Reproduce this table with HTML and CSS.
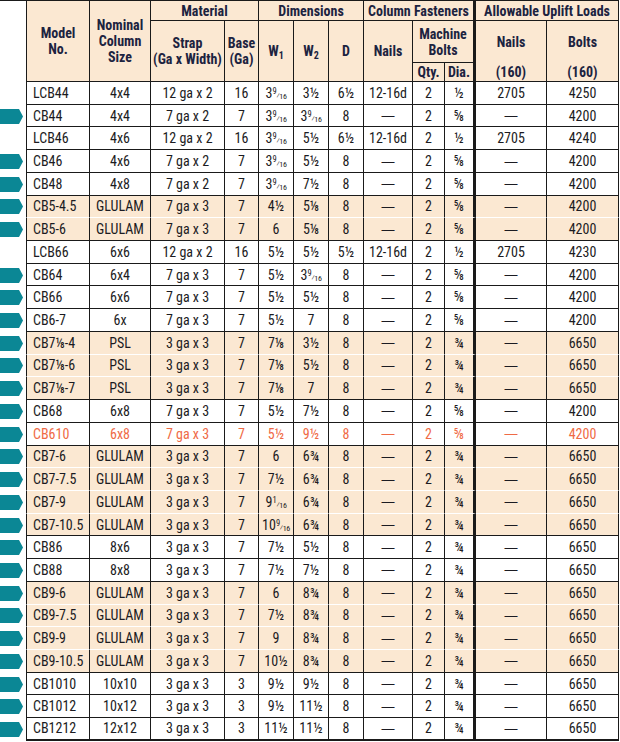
FILE: index.html
```html
<!DOCTYPE html>
<html>
<head>
<meta charset="utf-8">
<link rel="stylesheet" href="styles.css">
</head>
<body>
<table class="spec">
<colgroup>
<col class="c-mk"><col class="c-model"><col class="c-size"><col class="c-strap"><col class="c-base"><col class="c-w1"><col class="c-w2"><col class="c-d"><col class="c-nails"><col class="c-qty"><col class="c-dia"><col class="c-un"><col class="c-ub">
</colgroup>
<thead>
<tr class="h1">
<th class="mk" rowspan="3"></th>
<th class="model" rowspan="3">Model<br>No.</th>
<th rowspan="3">Nominal<br>Column<br>Size</th>
<th colspan="2">Material</th>
<th colspan="3">Dimensions</th>
<th colspan="3" class="thick">Column Fasteners</th>
<th colspan="2">Allowable Uplift Loads</th>
</tr>
<tr class="h2">
<th rowspan="2">Strap<br>(Ga x Width)</th>
<th rowspan="2">Base<br>(Ga)</th>
<th rowspan="2">W<sub class="ix">1</sub></th>
<th rowspan="2">W<sub class="ix">2</sub></th>
<th rowspan="2">D</th>
<th rowspan="2">Nails</th>
<th colspan="2" class="thick">Machine<br>Bolts</th>
<th class="nb">Nails</th>
<th class="nb">Bolts</th>
</tr>
<tr class="h3">
<th>Qty.</th>
<th class="thick">Dia.</th>
<th>(160)</th>
<th>(160)</th>
</tr>
</thead>
<tbody>
<tr><td class="mk"></td><td class="model">LCB44</td><td>4x4</td><td>12 ga x 2</td><td>16</td><td>3<span class="f"><sup>9</sup>⁄<sub>16</sub></span></td><td>3½</td><td>6½</td><td>12-16d</td><td>2</td><td class="thick">½</td><td>2705</td><td>4250</td></tr>
<tr><td class="mk"><svg class="arrow" viewBox="0 0 23 15" width="23" height="15"><polygon points="0,0 19,0 23,7.5 19,15 0,15"/></svg></td><td class="model">CB44</td><td>4x4</td><td>7 ga x 2</td><td>7</td><td>3<span class="f"><sup>9</sup>⁄<sub>16</sub></span></td><td>3<span class="f"><sup>9</sup>⁄<sub>16</sub></span></td><td>8</td><td><span class="dash">—</span></td><td>2</td><td class="thick">⅝</td><td><span class="dash">—</span></td><td>4200</td></tr>
<tr><td class="mk"></td><td class="model">LCB46</td><td>4x6</td><td>12 ga x 2</td><td>16</td><td>3<span class="f"><sup>9</sup>⁄<sub>16</sub></span></td><td>5½</td><td>6½</td><td>12-16d</td><td>2</td><td class="thick">½</td><td>2705</td><td>4240</td></tr>
<tr><td class="mk"><svg class="arrow" viewBox="0 0 23 15" width="23" height="15"><polygon points="0,0 19,0 23,7.5 19,15 0,15"/></svg></td><td class="model">CB46</td><td>4x6</td><td>7 ga x 2</td><td>7</td><td>3<span class="f"><sup>9</sup>⁄<sub>16</sub></span></td><td>5½</td><td>8</td><td><span class="dash">—</span></td><td>2</td><td class="thick">⅝</td><td><span class="dash">—</span></td><td>4200</td></tr>
<tr><td class="mk"><svg class="arrow" viewBox="0 0 23 15" width="23" height="15"><polygon points="0,0 19,0 23,7.5 19,15 0,15"/></svg></td><td class="model">CB48</td><td>4x8</td><td>7 ga x 2</td><td>7</td><td>3<span class="f"><sup>9</sup>⁄<sub>16</sub></span></td><td>7½</td><td>8</td><td><span class="dash">—</span></td><td>2</td><td class="thick">⅝</td><td><span class="dash">—</span></td><td>4200</td></tr>
<tr class="sh sw"><td class="mk"><svg class="arrow" viewBox="0 0 23 15" width="23" height="15"><polygon points="0,0 19,0 23,7.5 19,15 0,15"/></svg></td><td class="model">CB5-4.5</td><td>GLULAM</td><td>7 ga x 3</td><td>7</td><td>4½</td><td>5⅛</td><td>8</td><td><span class="dash">—</span></td><td>2</td><td class="thick">⅝</td><td><span class="dash">—</span></td><td>4200</td></tr>
<tr class="sh"><td class="mk"><svg class="arrow" viewBox="0 0 23 15" width="23" height="15"><polygon points="0,0 19,0 23,7.5 19,15 0,15"/></svg></td><td class="model">CB5-6</td><td>GLULAM</td><td>7 ga x 3</td><td>7</td><td>6</td><td>5⅛</td><td>8</td><td><span class="dash">—</span></td><td>2</td><td class="thick">⅝</td><td><span class="dash">—</span></td><td>4200</td></tr>
<tr><td class="mk"></td><td class="model">LCB66</td><td>6x6</td><td>12 ga x 2</td><td>16</td><td>5½</td><td>5½</td><td>5½</td><td>12-16d</td><td>2</td><td class="thick">½</td><td>2705</td><td>4230</td></tr>
<tr><td class="mk"><svg class="arrow" viewBox="0 0 23 15" width="23" height="15"><polygon points="0,0 19,0 23,7.5 19,15 0,15"/></svg></td><td class="model">CB64</td><td>6x4</td><td>7 ga x 3</td><td>7</td><td>5½</td><td>3<span class="f"><sup>9</sup>⁄<sub>16</sub></span></td><td>8</td><td><span class="dash">—</span></td><td>2</td><td class="thick">⅝</td><td><span class="dash">—</span></td><td>4200</td></tr>
<tr><td class="mk"><svg class="arrow" viewBox="0 0 23 15" width="23" height="15"><polygon points="0,0 19,0 23,7.5 19,15 0,15"/></svg></td><td class="model">CB66</td><td>6x6</td><td>7 ga x 3</td><td>7</td><td>5½</td><td>5½</td><td>8</td><td><span class="dash">—</span></td><td>2</td><td class="thick">⅝</td><td><span class="dash">—</span></td><td>4200</td></tr>
<tr><td class="mk"><svg class="arrow" viewBox="0 0 23 15" width="23" height="15"><polygon points="0,0 19,0 23,7.5 19,15 0,15"/></svg></td><td class="model">CB6-7</td><td>6x</td><td>7 ga x 3</td><td>7</td><td>5½</td><td>7</td><td>8</td><td><span class="dash">—</span></td><td>2</td><td class="thick">⅝</td><td><span class="dash">—</span></td><td>4200</td></tr>
<tr class="sh sw"><td class="mk"><svg class="arrow" viewBox="0 0 23 15" width="23" height="15"><polygon points="0,0 19,0 23,7.5 19,15 0,15"/></svg></td><td class="model">CB7⅛-4</td><td>PSL</td><td>3 ga x 3</td><td>7</td><td>7⅛</td><td>3½</td><td>8</td><td><span class="dash">—</span></td><td>2</td><td class="thick">¾</td><td><span class="dash">—</span></td><td>6650</td></tr>
<tr class="sh sw"><td class="mk"><svg class="arrow" viewBox="0 0 23 15" width="23" height="15"><polygon points="0,0 19,0 23,7.5 19,15 0,15"/></svg></td><td class="model">CB7⅛-6</td><td>PSL</td><td>3 ga x 3</td><td>7</td><td>7⅛</td><td>5½</td><td>8</td><td><span class="dash">—</span></td><td>2</td><td class="thick">¾</td><td><span class="dash">—</span></td><td>6650</td></tr>
<tr class="sh"><td class="mk"><svg class="arrow" viewBox="0 0 23 15" width="23" height="15"><polygon points="0,0 19,0 23,7.5 19,15 0,15"/></svg></td><td class="model">CB7⅛-7</td><td>PSL</td><td>3 ga x 3</td><td>7</td><td>7⅛</td><td>7</td><td>8</td><td><span class="dash">—</span></td><td>2</td><td class="thick">¾</td><td><span class="dash">—</span></td><td>6650</td></tr>
<tr><td class="mk"><svg class="arrow" viewBox="0 0 23 15" width="23" height="15"><polygon points="0,0 19,0 23,7.5 19,15 0,15"/></svg></td><td class="model">CB68</td><td>6x8</td><td>7 ga x 3</td><td>7</td><td>5½</td><td>7½</td><td>8</td><td><span class="dash">—</span></td><td>2</td><td class="thick">⅝</td><td><span class="dash">—</span></td><td>4200</td></tr>
<tr class="red"><td class="mk"><svg class="arrow" viewBox="0 0 23 15" width="23" height="15"><polygon points="0,0 19,0 23,7.5 19,15 0,15"/></svg></td><td class="model">CB610</td><td>6x8</td><td>7 ga x 3</td><td>7</td><td>5½</td><td>9½</td><td>8</td><td><span class="dash">—</span></td><td>2</td><td class="thick">⅝</td><td><span class="dash">—</span></td><td>4200</td></tr>
<tr class="sh sw"><td class="mk"><svg class="arrow" viewBox="0 0 23 15" width="23" height="15"><polygon points="0,0 19,0 23,7.5 19,15 0,15"/></svg></td><td class="model">CB7-6</td><td>GLULAM</td><td>3 ga x 3</td><td>7</td><td>6</td><td>6¾</td><td>8</td><td><span class="dash">—</span></td><td>2</td><td class="thick">¾</td><td><span class="dash">—</span></td><td>6650</td></tr>
<tr class="sh sw"><td class="mk"><svg class="arrow" viewBox="0 0 23 15" width="23" height="15"><polygon points="0,0 19,0 23,7.5 19,15 0,15"/></svg></td><td class="model">CB7-7.5</td><td>GLULAM</td><td>3 ga x 3</td><td>7</td><td>7½</td><td>6¾</td><td>8</td><td><span class="dash">—</span></td><td>2</td><td class="thick">¾</td><td><span class="dash">—</span></td><td>6650</td></tr>
<tr class="sh sw"><td class="mk"><svg class="arrow" viewBox="0 0 23 15" width="23" height="15"><polygon points="0,0 19,0 23,7.5 19,15 0,15"/></svg></td><td class="model">CB7-9</td><td>GLULAM</td><td>3 ga x 3</td><td>7</td><td>9<span class="f"><sup>1</sup>⁄<sub>16</sub></span></td><td>6¾</td><td>8</td><td><span class="dash">—</span></td><td>2</td><td class="thick">¾</td><td><span class="dash">—</span></td><td>6650</td></tr>
<tr class="sh"><td class="mk"><svg class="arrow" viewBox="0 0 23 15" width="23" height="15"><polygon points="0,0 19,0 23,7.5 19,15 0,15"/></svg></td><td class="model">CB7-10.5</td><td>GLULAM</td><td>3 ga x 3</td><td>7</td><td>10<span class="f"><sup>9</sup>⁄<sub>16</sub></span></td><td>6¾</td><td>8</td><td><span class="dash">—</span></td><td>2</td><td class="thick">¾</td><td><span class="dash">—</span></td><td>6650</td></tr>
<tr><td class="mk"><svg class="arrow" viewBox="0 0 23 15" width="23" height="15"><polygon points="0,0 19,0 23,7.5 19,15 0,15"/></svg></td><td class="model">CB86</td><td>8x6</td><td>3 ga x 3</td><td>7</td><td>7½</td><td>5½</td><td>8</td><td><span class="dash">—</span></td><td>2</td><td class="thick">¾</td><td><span class="dash">—</span></td><td>6650</td></tr>
<tr><td class="mk"><svg class="arrow" viewBox="0 0 23 15" width="23" height="15"><polygon points="0,0 19,0 23,7.5 19,15 0,15"/></svg></td><td class="model">CB88</td><td>8x8</td><td>3 ga x 3</td><td>7</td><td>7½</td><td>7½</td><td>8</td><td><span class="dash">—</span></td><td>2</td><td class="thick">¾</td><td><span class="dash">—</span></td><td>6650</td></tr>
<tr class="sh sw"><td class="mk"><svg class="arrow" viewBox="0 0 23 15" width="23" height="15"><polygon points="0,0 19,0 23,7.5 19,15 0,15"/></svg></td><td class="model">CB9-6</td><td>GLULAM</td><td>3 ga x 3</td><td>7</td><td>6</td><td>8¾</td><td>8</td><td><span class="dash">—</span></td><td>2</td><td class="thick">¾</td><td><span class="dash">—</span></td><td>6650</td></tr>
<tr class="sh sw"><td class="mk"><svg class="arrow" viewBox="0 0 23 15" width="23" height="15"><polygon points="0,0 19,0 23,7.5 19,15 0,15"/></svg></td><td class="model">CB9-7.5</td><td>GLULAM</td><td>3 ga x 3</td><td>7</td><td>7½</td><td>8¾</td><td>8</td><td><span class="dash">—</span></td><td>2</td><td class="thick">¾</td><td><span class="dash">—</span></td><td>6650</td></tr>
<tr class="sh sw"><td class="mk"><svg class="arrow" viewBox="0 0 23 15" width="23" height="15"><polygon points="0,0 19,0 23,7.5 19,15 0,15"/></svg></td><td class="model">CB9-9</td><td>GLULAM</td><td>3 ga x 3</td><td>7</td><td>9</td><td>8¾</td><td>8</td><td><span class="dash">—</span></td><td>2</td><td class="thick">¾</td><td><span class="dash">—</span></td><td>6650</td></tr>
<tr class="sh"><td class="mk"><svg class="arrow" viewBox="0 0 23 15" width="23" height="15"><polygon points="0,0 19,0 23,7.5 19,15 0,15"/></svg></td><td class="model">CB9-10.5</td><td>GLULAM</td><td>3 ga x 3</td><td>7</td><td>10½</td><td>8¾</td><td>8</td><td><span class="dash">—</span></td><td>2</td><td class="thick">¾</td><td><span class="dash">—</span></td><td>6650</td></tr>
<tr><td class="mk"><svg class="arrow" viewBox="0 0 23 15" width="23" height="15"><polygon points="0,0 19,0 23,7.5 19,15 0,15"/></svg></td><td class="model">CB1010</td><td>10x10</td><td>3 ga x 3</td><td>3</td><td>9½</td><td>9½</td><td>8</td><td><span class="dash">—</span></td><td>2</td><td class="thick">¾</td><td><span class="dash">—</span></td><td>6650</td></tr>
<tr><td class="mk"><svg class="arrow" viewBox="0 0 23 15" width="23" height="15"><polygon points="0,0 19,0 23,7.5 19,15 0,15"/></svg></td><td class="model">CB1012</td><td>10x12</td><td>3 ga x 3</td><td>3</td><td>9½</td><td>11½</td><td>8</td><td><span class="dash">—</span></td><td>2</td><td class="thick">¾</td><td><span class="dash">—</span></td><td>6650</td></tr>
<tr class="last"><td class="mk"><svg class="arrow" viewBox="0 0 23 15" width="23" height="15"><polygon points="0,0 19,0 23,7.5 19,15 0,15"/></svg></td><td class="model">CB1212</td><td>12x12</td><td>3 ga x 3</td><td>3</td><td>11½</td><td>11½</td><td>8</td><td><span class="dash">—</span></td><td>2</td><td class="thick">¾</td><td><span class="dash">—</span></td><td>6650</td></tr>
</tbody>
</table>
</body>
</html>
```
FILE: styles.css
```css
* { box-sizing: border-box; }
html, body { margin: 0; padding: 0; background: #fff; }
body {
  font-family: "Roboto Condensed", "DejaVu Sans Condensed", sans-serif;
  color: #1b1b22;
}
.spec {
  table-layout: fixed;
  border-collapse: separate;
  border-spacing: 0;
  width: 619px;
}
.c-mk { width: 26px; }
.c-model { width: 64px; }
.c-size { width: 61px; }
.c-strap { width: 74px; }
.c-base { width: 34px; }
.c-w1 { width: 35px; }
.c-w2 { width: 35px; }
.c-d { width: 35px; }
.c-nails { width: 49px; }
.c-qty { width: 32px; }
.c-dia { width: 31px; }
.c-un { width: 71px; }
.c-ub { width: 72px; }

th, td {
  padding: 0;
  border-right: 1px solid #1a1a1a;
  border-bottom: 1px solid #1a1a1a;
  text-align: center;
  vertical-align: middle;
  white-space: nowrap;
}
th {
  background: #fbe8d2;
  color: #1c2340;
  font-weight: 700;
  font-size: 14px;
  line-height: 16px;
}
thead .h1 th { border-top: 1px solid #1a1a1a; height: 21px; }
thead .h2 th { height: 42px; }
thead .h3 th { height: 19px; }
th.nb { border-bottom: none; }
.ix { font-size: 10px; vertical-align: -3px; line-height: 0; }

td {
  font-size: 14px;
  line-height: 16px;
  height: 22.72px;
}
th.model, td.model { border-left: 1px solid #1a1a1a; }
td.model { text-align: left; padding-left: 6px; }
th.mk, td.mk {
  background: transparent;
  border: none;
  text-align: left;
}
.thick { border-right: 3px solid #1a1a1a; }

.arrow { display: block; fill: #0b8795; }

tr.sh td:not(.mk) { background: #fbe8d2; }
tr.sw td:not(.mk) { border-bottom-color: #fff; }
tr.red td { color: #ef6a45; }
tr.last td:not(.mk) { border-bottom-width: 2px; }

.dash {
  font-family: "Liberation Sans", sans-serif;
  font-size: 13px;
}

.f { font-size: 8px; line-height: 0; letter-spacing: -0.3px; }
.f sup { vertical-align: 4px; font-size: 8.5px; line-height: 0; }
.f sub { vertical-align: -1px; font-size: 8px; line-height: 0; letter-spacing: -0.4px; }
```
